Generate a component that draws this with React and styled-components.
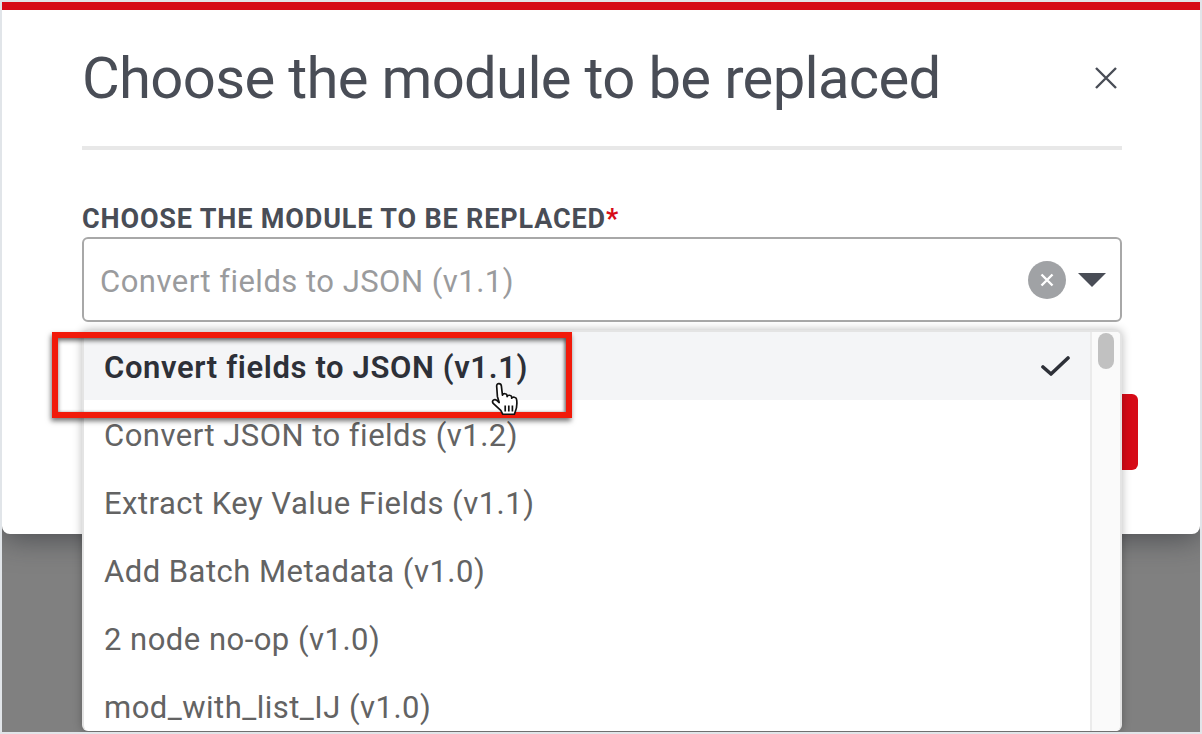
import React from 'react';
import styled, { createGlobalStyle } from 'styled-components';

const GlobalStyle = createGlobalStyle`
  html, body { margin: 0; padding: 0; background: #e1e5e9; }
  * { box-sizing: border-box; }
`;

const Page = styled.div`
  width: 1202px;
  height: 734px;
  padding: 2px;
  background: #e1e5e9;
  overflow: hidden;
  font-family: Roboto, "Liberation Sans", sans-serif;
`;

const Backdrop = styled.div`
  position: relative;
  height: 730px;
  background: #808080;
  overflow: hidden;
`;

const Modal = styled.div`
  height: 532px;
  padding: 0 78px 0 80px;
  background: #fff;
  border-top: 8px solid #d60b17;
  border-radius: 0 0 8px 8px;
  box-shadow: 0 4px 30px rgba(30, 32, 40, 0.55);
`;

const Header = styled.div`
  display: flex;
  align-items: center;
  justify-content: space-between;
  height: 140px;
  border-bottom: 4px solid #e8e8e8;
`;

const Title = styled.h1`
  margin: 0;
  font-size: 58px;
  font-weight: 400;
  line-height: 72px;
  letter-spacing: -0.68px;
  color: #494d56;
`;

const CloseButton = styled.button`
  display: flex;
  margin-right: 3px;
  padding: 0;
  border: 0;
  background: none;
  color: #494d56;
`;

const Field = styled.div`
  position: relative;
  margin-top: 55px;
`;

const Label = styled.label`
  display: block;
  height: 32px;
  font-size: 27px;
  font-weight: 700;
  line-height: 29px;
  letter-spacing: 0.85px;
  color: #494d56;
  text-transform: uppercase;

  span { color: #d60b17; }
`;

const Select = styled.div`
  display: flex;
  align-items: center;
  height: 85px;
  padding: 0 14px 0 16px;
  background: #fff;
  border: 2px solid #a8a8a8;
  border-radius: 6px;
`;

const Placeholder = styled.div`
  flex: 1;
  padding-top: 3px;
  font-size: 31px;
  letter-spacing: 0.48px;
  color: #9a9b9d;
`;

const ClearButton = styled.div`
  display: flex;
  align-items: center;
  justify-content: center;
  width: 38px;
  height: 38px;
  margin: 1px 12px 0 0;
  border-radius: 50%;
  background: #a0a2a5;
  color: #fff;
`;

const Caret = styled.div`
  width: 0;
  height: 0;
  border-left: 14px solid transparent;
  border-right: 14px solid transparent;
  border-top: 14px solid #494d56;
`;

const SaveButton = styled.div`
  width: 120px;
  height: 76px;
  margin: 72px -16px 0 auto;
  background: #d60b17;
  border-radius: 6px;
`;

const Menu = styled.div`
  position: absolute;
  top: 125px;
  left: 0;
  right: 0;
  height: 401px;
  display: flex;
  background: #fff;
  border: 2px solid #e4e4e4;
  border-bottom: 0;
  border-radius: 6px;
  box-shadow: 0 0 10px rgba(0, 0, 0, 0.28);
  overflow: hidden;
`;

const Options = styled.div`
  flex: 1;
`;

const Option = styled.div`
  display: flex;
  align-items: center;
  justify-content: space-between;
  height: 68px;
  padding: 2px 20px 0 20px;
  font-size: 31px;
  font-weight: ${props => props.selected ? 600 : 400};
  letter-spacing: ${props => props.selected ? '0.62px' : '0.48px'};
  color: ${props => props.selected ? '#2d3038' : '#636363'};
  background: ${props => props.selected ? '#f4f5f7' : 'transparent'};
`;

const CheckIcon = styled.svg`
  margin-top: -2px;
`;

const Scrollbar = styled.div`
  width: 30px;
  padding: 1px 0 0 6px;
  background: #fafafa;
  border-left: 2px solid #ebebeb;
`;

const Thumb = styled.div`
  width: 16px;
  height: 36px;
  border-radius: 8px;
  background: #c1c1c1;
`;

const Callout = styled.div`
  position: absolute;
  left: 50px;
  top: 330px;
  width: 520px;
  height: 86px;
  border: 6px solid #f11a0a;
  box-shadow: -1px 3px 5px rgba(0, 0, 0, 0.55), inset 0 3px 4px rgba(0, 0, 0, 0.5), inset -2px 0 3px rgba(0, 0, 0, 0.3);
`;

const HandCursor = styled.svg`
  position: absolute;
  left: 487px;
  top: 380px;
`;

const options = [
  'Convert JSON to fields (v1.2)',
  'Extract Key Value Fields (v1.1)',
  'Add Batch Metadata (v1.0)',
  '2 node no-op (v1.0)',
  'mod_with_list_IJ (v1.0)',
];

const App = () => {
  return (
    <Page>
      <GlobalStyle />
      <Backdrop>
        <Modal>
          <Header>
            <Title>Choose the module to be replaced</Title>
            <CloseButton>
              <svg width="26" height="26" viewBox="0 0 26 26" fill="none" stroke="currentColor" strokeWidth="2.4">
                <path d="M3 3l20 20M23 3L3 23" />
              </svg>
            </CloseButton>
          </Header>
          <Field>
            <Label>Choose the module to be replaced<span>*</span></Label>
            <Select>
              <Placeholder>Convert fields to JSON (v1.1)</Placeholder>
              <ClearButton>
                <svg width="14" height="14" viewBox="0 0 14 14" fill="none" stroke="currentColor" strokeWidth="2.4">
                  <path d="M1.5 1.5l11 11M12.5 1.5l-11 11" />
                </svg>
              </ClearButton>
              <Caret />
            </Select>
            <SaveButton />
            <Menu>
              <Options>
                <Option selected>
                  Convert fields to JSON (v1.1)
                  <CheckIcon width="30" height="22" viewBox="0 0 30 22" fill="none" stroke="currentColor" strokeWidth="3.6" strokeLinecap="round" strokeLinejoin="round">
                    <path d="M3 12l8 7L28 3" />
                  </CheckIcon>
                </Option>
                {options.map(o => <Option key={o}>{o}</Option>)}
              </Options>
              <Scrollbar><Thumb /></Scrollbar>
            </Menu>
          </Field>
        </Modal>
        <Callout />
        <HandCursor width="36" height="36" viewBox="0 0 30 30" fill="#fff" stroke="#111" strokeWidth="1.4" strokeLinejoin="round">
          <path d="M7 12l-.6-8.500c-.2-2.800 3.600-3 3.900-.2l.9 7.700c.4-1.800 3.700-1.600 3.800.3l.1.900c.4-1.700 3.600-1.500 3.800.4v.9c.6-1.500 3.900-1 4.100 1 .6 3.800 0 7.500-1.200 10.500l-.7 1.900H11.500l-1.700-3.200-6.300-5.800c-1.600-2.200 1-4.200 3-2.600l2 1.800z" />
          <path d="M13.500 19.500v5M16.500 19.500v5M19.500 19.500v5" fill="none" />
        </HandCursor>
      </Backdrop>
    </Page>
  );
};

export default App;
